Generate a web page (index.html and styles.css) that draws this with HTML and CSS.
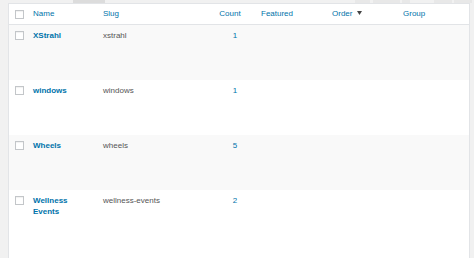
FILE: index.html
```html
<!DOCTYPE html>
<html lang="en">
<head>
  <meta charset="UTF-8">
  <title>Categories</title>
  <link rel="stylesheet" href="styles.css">
</head>
<body>
  <!-- top nav edge (buttons cut off above) -->
  <div class="tablenav">
    <span class="nav-btn nav-btn-dark" style="margin-left:73px;width:32px"></span>
    <span class="nav-btn" style="margin-left:250px;width:15px"></span>
    <span class="nav-btn" style="margin-left:3px;width:27px"></span>
    <span class="nav-btn" style="margin-left:2px;width:8px"></span>
    <span class="nav-btn" style="margin-left:24px;width:18px"></span>
    <span class="nav-btn" style="margin-left:2px;width:18px"></span>
  </div>

  <table class="list-table">
    <colgroup>
      <col class="col-cb">
      <col class="col-name">
      <col class="col-slug">
      <col class="col-count">
      <col class="col-featured">
      <col class="col-order">
      <col class="col-group">
    </colgroup>
    <thead>
      <tr>
        <th class="cb"><span class="checkbox"></span></th>
        <th><a href="#">Name</a></th>
        <th><a href="#">Slug</a></th>
        <th class="num"><a href="#" class="sort-count">Count</a></th>
        <th><a href="#">Featured</a></th>
        <th><a href="#">Order <svg class="sort-arrow" width="5" height="4" viewBox="0 0 5 4"><path d="M0 0h5L2.5 4z"/></svg></a></th>
        <th><a href="#">Group</a></th>
      </tr>
    </thead>
    <tbody>
      <tr>
        <td class="cb"><span class="checkbox"></span></td>
        <td class="name"><a href="#">XStrahl</a></td>
        <td class="slug">xstrahl</td>
        <td class="num"><a href="#">1</a></td>
        <td></td><td></td><td></td>
      </tr>
      <tr>
        <td class="cb"><span class="checkbox"></span></td>
        <td class="name"><a href="#">windows</a></td>
        <td class="slug">windows</td>
        <td class="num"><a href="#">1</a></td>
        <td></td><td></td><td></td>
      </tr>
      <tr>
        <td class="cb"><span class="checkbox"></span></td>
        <td class="name"><a href="#">Wheels</a></td>
        <td class="slug">wheels</td>
        <td class="num"><a href="#">5</a></td>
        <td></td><td></td><td></td>
      </tr>
      <tr class="last-row">
        <td class="cb"><span class="checkbox"></span></td>
        <td class="name"><a href="#">Wellness Events</a></td>
        <td class="slug">wellness-events</td>
        <td class="num"><a href="#">2</a></td>
        <td></td><td></td><td></td>
      </tr>
    </tbody>
  </table>
</body>
</html>
```

FILE: styles.css
```css
:root {
  --link: #0073aa;
  --text: #555;
  --border: #e2e4e7;
  --stripe: #f9f9f9;
  --bg: #f1f1f1;
}
html, body {
  margin: 0;
  padding: 0;
  background: var(--bg);
  font-family: "Liberation Sans", Arial, sans-serif;
  font-size: 8px;
  color: var(--text);
}

/* ---- top nav strip ---- */
.tablenav {
  display: flex;
  height: 3px;
  overflow: hidden;
}
.nav-btn {
  display: block;
  height: 3px;
  background: #e8e8e8;
}
.nav-btn-dark { background: #dcdcdc; }

/* ---- table ---- */
.list-table {
  margin-left: 8px;
  width: 462px;
  table-layout: fixed;
  border-collapse: separate;
  border-spacing: 0;
  border: 1px solid var(--border);
  border-bottom: none;
  background: #fff;
}
.col-cb { width: 19px; }
.col-name { width: 70px; }
.col-slug { width: 116px; }
.col-count { width: 42px; }
.col-featured,
.col-order,
.col-group { width: 71px; }

.list-table th {
  height: 20px;
  padding: 0 5px;
  text-align: left;
  font-weight: normal;
  vertical-align: middle;
  border-bottom: 1px solid var(--border);
  line-height: 12px;
}
.list-table a {
  color: var(--link);
  text-decoration: none;
}
.list-table td {
  height: 55px;
  box-sizing: border-box;
  padding: 5px 5px 0;
  vertical-align: top;
  line-height: 11px;
}
.list-table tbody tr:nth-child(odd) { background: var(--stripe); }
.list-table .last-row td { height: 80px; }

.list-table .cb { padding: 0 0 0 6px; }
.list-table th.cb { vertical-align: middle; }
.list-table td.cb { padding-top: 6px; }
.checkbox {
  display: block;
  width: 9px;
  height: 9px;
  box-sizing: border-box;
  border: 1px solid #c3c6c9;
  background: #fff;
  box-shadow: inset 0 1px 1px rgba(0,0,0,0.06);
}

.list-table .num {
  padding-left: 0;
  padding-right: 0;
  text-align: center;
}
.sort-count { padding-right: 10px; }
.sort-arrow {
  fill: #444;
  margin-left: 2px;
  vertical-align: 1px;
}

.name a { font-weight: bold; }
.slug { color: var(--text); }
```
